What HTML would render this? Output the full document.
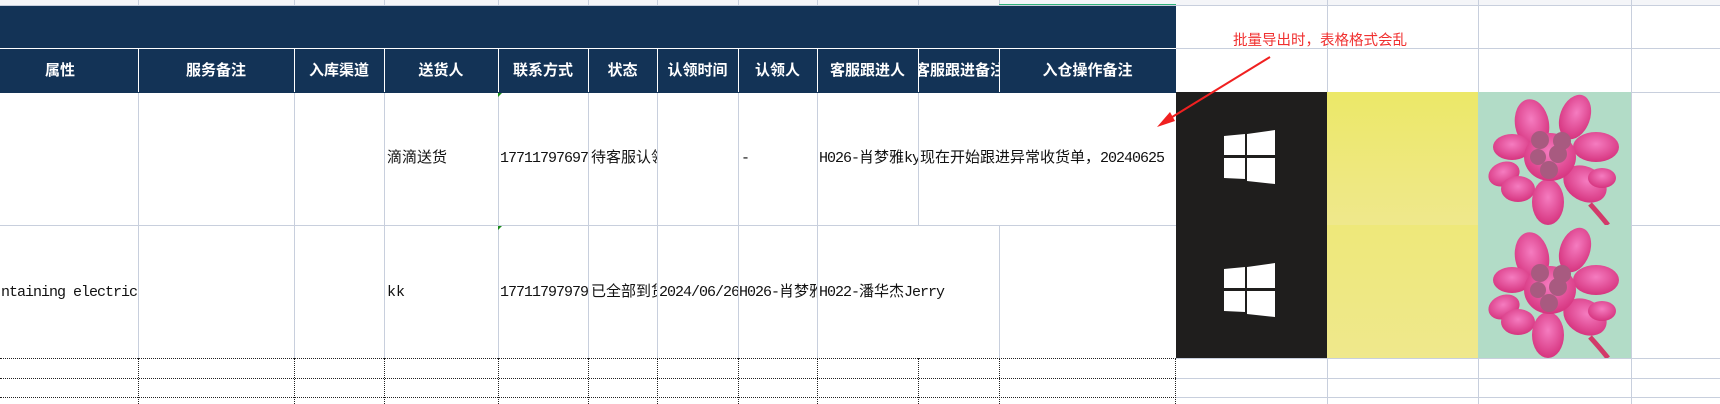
<!DOCTYPE html>
<html><head><meta charset="utf-8"><style>
*{margin:0;padding:0;box-sizing:border-box}
body{width:1720px;height:404px;overflow:hidden;background:#fff;position:relative;font-family:"Liberation Mono","Noto Sans CJK SC",monospace}
.a{position:absolute}
.h{position:absolute;top:49px;height:43px;color:#fff;font:bold 15px "Liberation Sans","Noto Sans CJK SC",sans-serif;line-height:43px;text-align:center;white-space:nowrap;overflow:hidden;border-right:1px solid #fff}
.c{position:absolute;height:22px;line-height:22px;font-size:15px;color:#111;white-space:nowrap;overflow:hidden}
.n{letter-spacing:-1px}
.vl{position:absolute;width:1px;background:#c8cfdd}
.hl{position:absolute;height:1px;background:#c8cfdd}
.dt{position:absolute;height:0;border-top:1px dotted #222;left:0;width:1176px}
.dv{position:absolute;width:0;border-left:1px dotted #222;top:358px;height:46px}
</style></head><body>
<div class="a" style="left:0;top:0;width:1720px;height:6px;background:#f4f5f8"></div>
<div class="vl" style="left:138px;top:0;height:6px"></div>
<div class="vl" style="left:294px;top:0;height:6px"></div>
<div class="vl" style="left:384px;top:0;height:6px"></div>
<div class="vl" style="left:498px;top:0;height:6px"></div>
<div class="vl" style="left:588px;top:0;height:6px"></div>
<div class="vl" style="left:657px;top:0;height:6px"></div>
<div class="vl" style="left:738px;top:0;height:6px"></div>
<div class="vl" style="left:817px;top:0;height:6px"></div>
<div class="vl" style="left:918px;top:0;height:6px"></div>
<div class="vl" style="left:999px;top:0;height:6px"></div>
<div class="a" style="left:999px;top:4px;width:177px;height:2px;background:#2fb27a"></div>
<div class="hl" style="left:0;top:5px;width:1720px"></div>
<div class="a" style="left:0;top:6px;width:1176px;height:87px;background:#133356"></div>
<div class="a" style="left:0;top:48px;width:1176px;height:1px;background:#fff"></div>
<div class="h" style="left:-18px;width:157px">属性</div>
<div class="h" style="left:138px;width:157px">服务备注</div>
<div class="h" style="left:294px;width:91px">入库渠道</div>
<div class="h" style="left:384px;width:115px">送货人</div>
<div class="h" style="left:498px;width:91px">联系方式</div>
<div class="h" style="left:588px;width:70px">状态</div>
<div class="h" style="left:657px;width:82px">认领时间</div>
<div class="h" style="left:738px;width:80px">认领人</div>
<div class="h" style="left:817px;width:102px">客服跟进人</div>
<div class="h" style="left:918px;width:82px;text-align:left;text-indent:-3px">客服跟进备注</div>
<div class="h" style="left:999px;width:177px;border:none">入仓操作备注</div>
<!-- grid right area -->
<div class="hl" style="left:1176px;top:48px;width:544px"></div>
<div class="hl" style="left:1176px;top:92px;width:544px"></div>
<div class="vl" style="left:1327px;top:0;height:404px"></div>
<div class="vl" style="left:1478px;top:0;height:404px"></div>
<div class="vl" style="left:1631px;top:0;height:404px"></div>
<div class="hl" style="left:0;top:225px;width:1720px"></div>
<div class="hl" style="left:1176px;top:358px;width:544px"></div>
<div class="hl" style="left:1176px;top:378px;width:544px"></div>
<div class="hl" style="left:1176px;top:397px;width:544px"></div>
<!-- body vertical lines -->
<div class="vl" style="left:138px;top:93px;height:265px"></div>
<div class="vl" style="left:294px;top:93px;height:265px"></div>
<div class="vl" style="left:384px;top:93px;height:265px"></div>
<div class="vl" style="left:498px;top:93px;height:265px"></div>
<div class="vl" style="left:588px;top:93px;height:265px"></div>
<div class="vl" style="left:657px;top:93px;height:265px"></div>
<div class="vl" style="left:738px;top:93px;height:265px"></div>
<div class="vl" style="left:817px;top:93px;height:265px"></div>
<div class="vl" style="left:918px;top:93px;height:132px"></div>
<div class="vl" style="left:999px;top:226px;height:132px"></div>
<div class="a" style="left:498px;top:93px;border-top:4px solid #1a8a1a;border-right:4px solid transparent"></div>
<div class="a" style="left:498px;top:226px;border-top:4px solid #1a8a1a;border-right:4px solid transparent"></div>
<!-- row1 -->
<div class="c" style="left:387px;top:148px;width:110px">滴滴送货</div>
<div class="c n" style="left:500px;top:148px;width:88px">17711797697</div>
<div class="c" style="left:591px;top:148px;width:66px">待客服认领</div>
<div class="c" style="left:741px;top:148px;width:60px">-</div>
<div class="c" style="left:819px;top:148px;width:99px"><span class="n">H026-</span>肖梦雅<span class="n">ky</span></div>
<div class="c" style="left:920px;top:148px;width:256px">现在开始跟进异常收货单，<span class="n">20240625</span></div>
<!-- row2 -->
<div class="c n" style="left:-10px;top:282px;width:147px;text-align:right">ntaining electric</div>
<div class="c" style="left:387px;top:282px;width:110px">kk</div>
<div class="c n" style="left:500px;top:282px;width:88px">17711797979</div>
<div class="c" style="left:591px;top:282px;width:66px">已全部到货</div>
<div class="c n" style="left:659px;top:282px;width:79px">2024/06/26</div>
<div class="c" style="left:739px;top:282px;width:78px"><span class="n">H026-</span>肖梦雅</div>
<div class="c" style="left:819px;top:282px;width:200px"><span class="n">H022-</span>潘华杰<span class="n">Jerry</span></div>
<!-- dotted -->
<div class="dt" style="top:358px"></div>
<div class="dt" style="top:378px"></div>
<div class="dt" style="top:397px"></div>
<div class="dv" style="left:138px"></div><div class="dv" style="left:294px"></div><div class="dv" style="left:384px"></div><div class="dv" style="left:498px"></div><div class="dv" style="left:588px"></div><div class="dv" style="left:657px"></div><div class="dv" style="left:738px"></div><div class="dv" style="left:817px"></div><div class="dv" style="left:918px"></div><div class="dv" style="left:999px"></div><div class="dv" style="left:1175px"></div>
<!-- images -->
<svg class="a" style="left:1176px;top:92px" width="455" height="266" viewBox="0 0 455 266">
<defs>
<linearGradient id="y" x1="0" y1="0" x2="0" y2="1"><stop offset="0" stop-color="#ece868"/><stop offset="1" stop-color="#efe88c"/></linearGradient>
<radialGradient id="p" cx="0.5" cy="0.4" r="0.6"><stop offset="0" stop-color="#f57cc0"/><stop offset="1" stop-color="#d6347f"/></radialGradient>
<g id="win"><path d="M48 44 L69 42 L69 63 L48 63Z M71 42 L99 38 L99 63 L71 63Z M48 66 L69 66 L69 87 L48 86Z M71 66 L99 66 L99 92 L71 89Z" fill="#fff"/></g>
<g id="fl"><rect width="153" height="133" fill="#b2dcc7"/>
<path d="M112 112 Q122 123 130 133" stroke="#d23a6a" stroke-width="5" fill="none"/>
<g fill="url(#p)">
<ellipse cx="54" cy="32" rx="17" ry="25" transform="rotate(-10 54 32)"/>
<ellipse cx="97" cy="25" rx="15" ry="23" transform="rotate(20 97 25)"/>
<ellipse cx="34" cy="55" rx="19" ry="13"/>
<ellipse cx="118" cy="55" rx="23" ry="15"/>
<ellipse cx="26" cy="82" rx="16" ry="12" transform="rotate(-20 26 82)"/>
<ellipse cx="40" cy="97" rx="17" ry="13"/>
<ellipse cx="70" cy="110" rx="16" ry="23"/>
<ellipse cx="107" cy="92" rx="23" ry="17" transform="rotate(30 107 92)"/>
<ellipse cx="124" cy="86" rx="14" ry="10"/>
<ellipse cx="72" cy="65" rx="26" ry="24"/>
</g>
<g fill="#a85a80"><circle cx="62" cy="48" r="9"/><circle cx="84" cy="49" r="9"/><circle cx="60" cy="65" r="8"/><circle cx="80" cy="62" r="9"/><circle cx="71" cy="78" r="9"/></g>
</g>
</defs>
<rect x="0" y="0" width="151" height="266" fill="#1f1e1d"/>
<use href="#win"/><use href="#win" y="133"/>
<rect x="151" y="0" width="151" height="266" fill="url(#y)"/>
<rect x="151" y="0" width="151" height="133" fill="url(#y)"/>
<use href="#fl" x="302"/><use href="#fl" x="302" y="133"/>
</svg>
<!-- annotation -->
<div class="a" style="left:1233px;top:29px;font:14.5px 'Liberation Sans','Noto Sans CJK SC',sans-serif;color:#f03030;white-space:nowrap">批量导出时，表格格式会乱</div>
<svg class="a" style="left:1150px;top:50px" width="130" height="90"><line x1="120" y1="7" x2="14" y2="72" stroke="#f02020" stroke-width="2"/><path d="M7 77 L20 62 L25 71Z" fill="#f02020"/></svg>
</body></html>
